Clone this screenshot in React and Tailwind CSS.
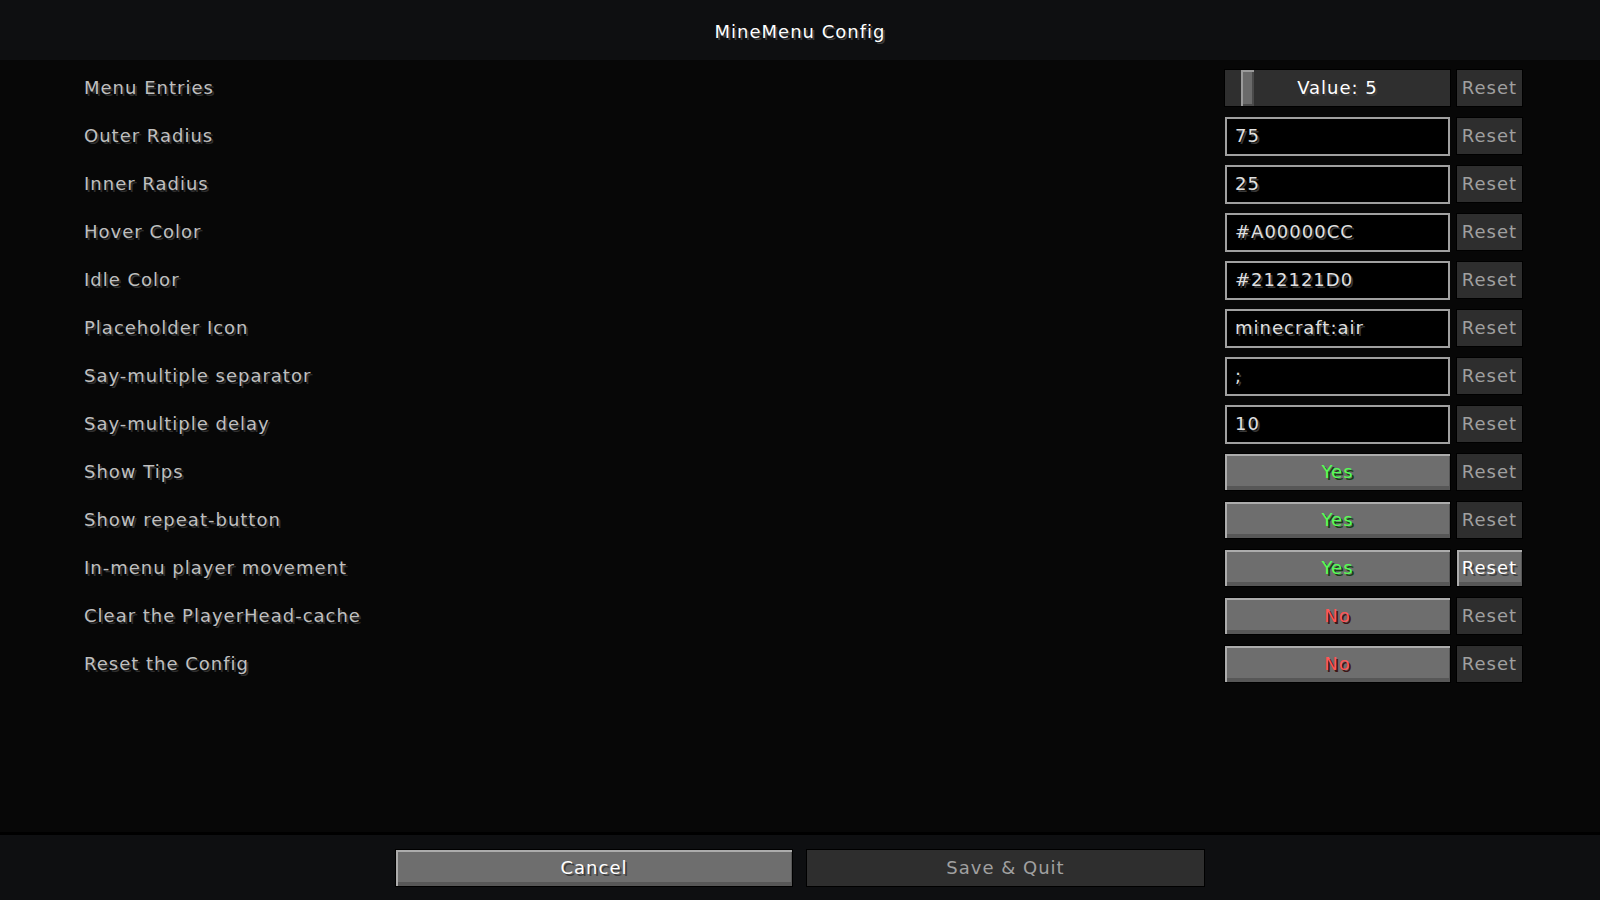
import React from "react";

const rows = [
  { label: "Menu Entries", type: "slider", value: "Value: 5" },
  { label: "Outer Radius", type: "text", value: "75" },
  { label: "Inner Radius", type: "text", value: "25" },
  { label: "Hover Color", type: "text", value: "#A00000CC" },
  { label: "Idle Color", type: "text", value: "#212121D0" },
  { label: "Placeholder Icon", type: "text", value: "minecraft:air" },
  { label: "Say-multiple separator", type: "text", value: ";" },
  { label: "Say-multiple delay", type: "text", value: "10" },
  { label: "Show Tips", type: "bool", value: true },
  { label: "Show repeat-button", type: "bool", value: true },
  { label: "In-menu player movement", type: "bool", value: true, resetActive: true },
  { label: "Clear the PlayerHead-cache", type: "bool", value: false },
  { label: "Reset the Config", type: "bool", value: false },
];

const font = "font-['DejaVu_Sans',sans-serif] text-[18px] tracking-[1px] leading-none";

function McButton({ children, disabled, className = "" }) {
  return (
    <div
      className={`flex items-center justify-center border border-black ${
        disabled
          ? "bg-[#2e2e2e] text-[#a0a0a0]"
          : "bg-[#6e6e6e] text-white [text-shadow:2px_2px_0_#3f3f3f] shadow-[inset_2px_2px_0_#acacac,inset_-1px_-4px_0_#575757]"
      } ${className}`}
    >
      {children}
    </div>
  );
}

function Control({ row }) {
  if (row.type === "slider") {
    return (
      <div className="relative flex h-[38px] w-[227px] items-center justify-center border border-black bg-[#2f2f2f]">
        <div className="absolute left-[16px] top-0 h-full w-[13px] bg-[#6a6a6a] shadow-[inset_2px_2px_0_#9a9a9a,inset_-2px_-2px_0_#4a4a4a]" />
        <span className="relative text-white [text-shadow:2px_2px_0_#3f3f3f]">{row.value}</span>
      </div>
    );
  }
  if (row.type === "text") {
    return (
      <div className="ml-[1px] mr-[1px] flex h-[39px] w-[225px] items-center border-2 border-[#a0a0a0] bg-black pl-[8px] text-[#e0e0e0] [text-shadow:2px_2px_0_#383838]">
        {row.value}
      </div>
    );
  }
  return (
    <McButton className="h-[38px] w-[227px]">
      {row.value ? (
        <span className="text-[#55ff55] [text-shadow:2px_2px_0_#153f15]">Yes</span>
      ) : (
        <span className="text-[#ff5555] [text-shadow:2px_2px_0_#3f1515]">No</span>
      )}
    </McButton>
  );
}

export default function App() {
  return (
    <div className={`flex h-[900px] w-[1600px] flex-col bg-[#070707] ${font}`}>
      {/* Title bar */}
      <div className="flex h-[60px] items-center justify-center bg-[#0e0f11] pt-[4px] text-white [text-shadow:2px_2px_0_#3f3f3f]">
        MineMenu Config
      </div>

      {/* Entries */}
      <div className="flex-1 pt-[4px]">
        {rows.map((row) => (
          <div key={row.label} className="flex h-[48px] items-center pl-[84px] pr-[77px]">
            <span className="flex-1 text-[#c0c0c0] [text-shadow:2px_2px_0_#303030]">{row.label}</span>
            <Control row={row} />
            <McButton disabled={!row.resetActive} className="ml-[5px] h-[38px] w-[67px]">
              Reset
            </McButton>
          </div>
        ))}
      </div>

      {/* Footer */}
      <div className="h-[3px] bg-black" />
      <div className="flex h-[65px] items-center justify-center gap-[13px] bg-[#0e0f11]">
        <McButton className="h-[38px] w-[398px]">Cancel</McButton>
        <McButton disabled className="h-[38px] w-[399px]">
          Save &amp; Quit
        </McButton>
      </div>
    </div>
  );
}
